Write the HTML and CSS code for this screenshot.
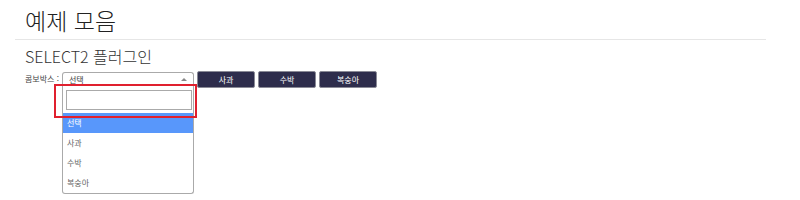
FILE: index.html
```html
<!DOCTYPE html>
<html lang="ko">
<head>
  <meta charset="UTF-8">
  <meta name="viewport" content="width=device-width, initial-scale=1.0">
  <title>예제 모음</title>
  <link rel="stylesheet" href="styles.css">
</head>
<body>
  <div class="page">
    <h1>예제 모음</h1>
    <h2>SELECT2 플러그인</h2>

    <div class="combo-row">
      <label class="combo-label">콤보박스 :</label>
      <div class="select2">
        <div class="select2-selection">
          <span class="select2-text">선택</span>
          <b class="select2-arrow"></b>
        </div>
        <div class="select2-dropdown">
          <div class="select2-search">
            <input type="text" class="select2-search-field">
          </div>
          <ul class="select2-results">
            <li class="highlighted">선택</li>
            <li>사과</li>
            <li>수박</li>
            <li>복숭아</li>
          </ul>
        </div>
        <div class="highlight-box"></div>
      </div>
      <button class="fruit-btn">사과</button>
      <button class="fruit-btn">수박</button>
      <button class="fruit-btn">복숭아</button>
    </div>
  </div>
</body>
</html>
```

FILE: styles.css
```css
/* Global Styling */
body {
  font-family: "Noto Sans CJK KR", "Noto Sans", sans-serif;
  margin: 0;
  padding: 0;
  background-color: #ffffff;
  color: #333333;
}

.page {
  width: 751px;
  min-height: 200px;
  margin-left: 15px;
}

h1 {
  margin: 0;
  padding: 2px 10px 0;
  height: 37px;
  font-size: 23px;
  line-height: 36px;
  font-weight: 300;
  color: #222222;
  border-bottom: 1px solid #e6e6e6;
}

h2 {
  margin: 6px 0 6px;
  padding: 0 10px;
  font-size: 16px;
  line-height: 20px;
  font-weight: 300;
  color: #333333;
}

.combo-row {
  display: flex;
  align-items: flex-start;
  padding-left: 10px;
  min-height: 130px;
}

.combo-label {
  font-size: 8px;
  line-height: 14px;
  width: 37px;
  white-space: nowrap;
  color: #444444;
}

/* select2 look */
.select2 {
  position: relative;
  width: 132px;
  margin-right: 3px;
}

.select2-selection {
  display: flex;
  align-items: center;
  height: 13px;
  border: 1px solid #aaaaaa;
  border-bottom-color: transparent;
  border-radius: 3px 3px 0 0;
  padding: 0 6px;
  background-color: #ffffff;
}

.select2-text {
  flex: 1;
  font-size: 8px;
  line-height: 13px;
  color: #444444;
}

.select2-arrow {
  width: 0;
  height: 0;
  border-left: 3px solid transparent;
  border-right: 3px solid transparent;
  border-bottom: 3px solid #888888;
}

.select2-dropdown {
  position: absolute;
  top: 14px;
  left: 0;
  width: 130px;
  border: 1px solid #aaaaaa;
  border-top: none;
  border-radius: 0 0 3px 3px;
  background-color: #ffffff;
  z-index: 2;
}

.select2-search {
  padding: 4px 2px 3px 3px;
}

.select2-search-field {
  display: block;
  box-sizing: border-box;
  width: 126px;
  height: 20px;
  margin: 0;
  padding: 0 4px;
  border: 1px solid #aaaaaa;
  outline: none;
}

.select2-results {
  list-style: none;
  margin: 0;
  padding: 0;
}

.select2-results li {
  height: 20px;
  line-height: 20px;
  padding-left: 4px;
  font-size: 8px;
  color: #666666;
}

.select2-results li.highlighted {
  background-color: #5897fb;
  color: #ffffff;
}

/* red annotation box */
.highlight-box {
  position: absolute;
  top: 12px;
  left: -8px;
  width: 139px;
  height: 30px;
  border: 2px solid #e0202e;
  z-index: 3;
}

.fruit-btn {
  box-sizing: border-box;
  width: 58px;
  height: 17px;
  margin: -1px 3px 0 0;
  padding: 0;
  font-family: inherit;
  font-size: 8px;
  line-height: 15px;
  color: #ffffff;
  background-color: #2e2d4c;
  border: 1px solid #8a8a96;
  border-radius: 2px;
  cursor: pointer;
}
```
